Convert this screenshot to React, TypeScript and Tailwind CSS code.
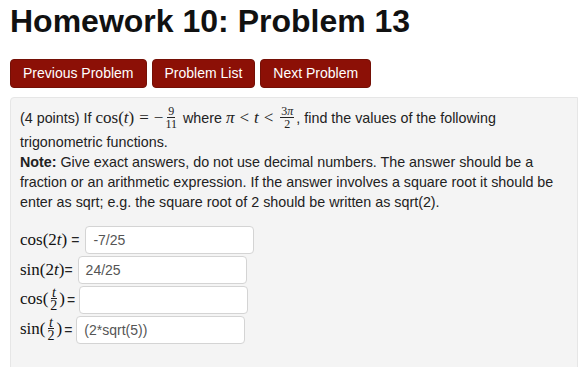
import React from "react";

const serif = { fontFamily: '"Liberation Serif", "Times New Roman", serif' };

function Frac({ num, den, size = "text-[12px]" }: { num: React.ReactNode; den: React.ReactNode; size?: string }) {
  return (
    <span className={`inline-flex flex-col items-center align-middle mx-[2px] leading-[12px] relative -top-[1px] ${size}`} style={serif}>
      <span className="px-[1px] border-b border-[#222] leading-[11px]">{num}</span>
      <span className="leading-[13px]">{den}</span>
    </span>
  );
}

function Label({ children }: { children: React.ReactNode }) {
  return <span className="text-[17px] text-[#111]" style={serif}>{children}</span>;
}

function Field({ value, label }: { value: string; label: React.ReactNode }) {
  return (
    <div className="flex items-center h-[28px]">
      {label}
      <div className="ml-[4px] w-[169px] h-[28px] bg-white border border-[#d4d4d4] rounded-[4px] flex items-center pl-[7px] text-[14px] text-[#555]">
        {value}
      </div>
    </div>
  );
}

export default function App() {
  return (
    <div className="w-[578px] h-[367px] overflow-hidden bg-white text-[#222]" style={{ fontFamily: '"Liberation Sans", Arial, Helvetica, sans-serif' }}>
      <h1 className="ml-[10px] mt-[3px] text-[32px] leading-[36px] font-bold text-[#111]">Homework 10: Problem 13</h1>
      <div className="flex gap-[5px] ml-[10px] mt-[20px]">
        <div className="h-[29px] px-[12px] flex items-center bg-[#8c1006] border border-[#741006] rounded-[4px] text-white text-[14px]">Previous Problem</div>
        <div className="h-[29px] px-[12px] flex items-center bg-[#8c1006] border border-[#741006] rounded-[4px] text-white text-[14px]">Problem List</div>
        <div className="h-[29px] px-[12px] flex items-center bg-[#8c1006] border border-[#741006] rounded-[4px] text-white text-[14px]">Next Problem</div>
      </div>
      <div className="ml-[10px] mt-[9px] h-[300px] bg-[#f4f4f4] border border-[#e6e6e6] rounded-tl-[4px] pl-[9px] pr-[10px] pt-[9px] text-[14.3px] leading-[20px] text-[#222]">
        <p>
          (4 points) If{" "}
          <span className="text-[17px]" style={serif}>cos(<i>t</i>)<span className="mx-[5px]">=</span>−</span>
          <Frac num="9" den="11" /> where{" "}
          <span className="text-[17px]" style={serif}><i>π</i><span className="mx-[5px]">&lt;</span><i>t</i><span className="mx-[5px]">&lt;</span></span>
          <Frac num={<>3<i>π</i></>} den="2" />, find the values of the following trigonometric functions.
        </p>
        <p>
          <b>Note:</b> Give exact answers, do not use decimal numbers. The answer should be a fraction or an arithmetic expression. If the answer involves a square root it should be enter as sqrt; e.g. the square root of 2 should be written as sqrt(2).
        </p>
        <div className="mt-[14px] flex flex-col gap-[2px]">
          <Field value="-7/25" label={<><Label>cos(2<i>t</i>)</Label><span className="text-[14px] ml-[4px] mr-[2px]">=</span></>} />
          <Field value="24/25" label={<><Label>sin(2<i>t</i>)</Label><span className="text-[14px] mr-[1px]">=</span></>} />
          <Field value="" label={<><Label>cos(<Frac num={<i>t</i>} den="2" size="text-[14px]" />)</Label><span className="text-[14px] ml-[2px]">=</span></>} />
          <Field value="(2*sqrt(5))" label={<><Label>sin(<Frac num={<i>t</i>} den="2" size="text-[14px]" />)</Label><span className="text-[14px] ml-[2px]">=</span></>} />
        </div>
      </div>
    </div>
  );
}
